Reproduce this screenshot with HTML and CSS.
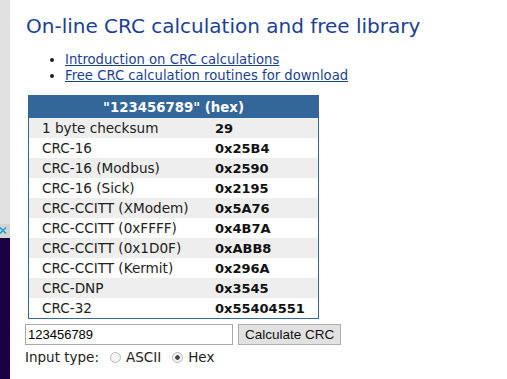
FILE: index.html
```html
<!DOCTYPE html>
<html lang="en">
<head>
  <meta charset="UTF-8">
  <title>On-line CRC calculation and free library</title>
  <link rel="stylesheet" href="styles.css">
</head>
<body>

  <div class="page">
    <div class="side">
      <div class="side-top"></div>
      <div class="ad-close">
        <svg width="10" height="14" viewBox="0 0 10 14">
          <path d="M0 3.5 L6 9.5 M6 3.5 L0 9.5" stroke="#1aa3c8" stroke-width="1.6" fill="none"/>
        </svg>
      </div>
      <div class="side-ad"></div>
    </div>

    <div class="content">
      <h1>On-line CRC calculation and free library</h1>

      <ul class="links">
        <li><a href="#">Introduction on CRC calculations</a></li>
        <li><a href="#">Free CRC calculation routines for download</a></li>
      </ul>

      <table class="crc-table">
        <tr><th colspan="2">"123456789" (hex)</th></tr>
        <tr><td class="name">1 byte checksum</td><td class="val">29</td></tr>
        <tr><td class="name">CRC-16</td><td class="val">0x25B4</td></tr>
        <tr><td class="name">CRC-16 (Modbus)</td><td class="val">0x2590</td></tr>
        <tr><td class="name">CRC-16 (Sick)</td><td class="val">0x2195</td></tr>
        <tr><td class="name">CRC-CCITT (XModem)</td><td class="val">0x5A76</td></tr>
        <tr><td class="name">CRC-CCITT (0xFFFF)</td><td class="val">0x4B7A</td></tr>
        <tr><td class="name">CRC-CCITT (0x1D0F)</td><td class="val">0xABB8</td></tr>
        <tr><td class="name">CRC-CCITT (Kermit)</td><td class="val">0x296A</td></tr>
        <tr><td class="name">CRC-DNP</td><td class="val">0x3545</td></tr>
        <tr><td class="name">CRC-32</td><td class="val">0x55404551</td></tr>
      </table>

      <form class="calc" onsubmit="return false;">
        <div class="calc-row">
          <input type="text" class="calc-input" value="123456789">
          <button type="submit" class="calc-button">Calculate CRC</button>
        </div>
        <div class="type-row">
          <span class="type-label">Input type:</span>
          <label><input type="radio" name="type"> ASCII</label>
          <label><input type="radio" name="type" checked> Hex</label>
        </div>
      </form>
    </div>
  </div>

</body>
</html>
```

FILE: styles.css
```css
body {
  margin: 0;
  padding: 0;
  background-color: white;
  font-family: "DejaVu Sans", Verdana, sans-serif;
  color: #222;
}

.page {
  display: flex;
  min-height: 379px;
}

/* strip on the left (ad frame) */
.side {
  width: 10px;
  display: flex;
  flex-direction: column;
}

.side-top {
  height: 224px;
  background-color: #e1e1e1;
}

.ad-close {
  height: 14px;
  background-color: #d4d4d4;
}

.ad-close svg {
  display: block;
}

.side-ad {
  flex: 1;
  background-color: #1b0043;
}

.content {
  padding-left: 15px;
}

h1 {
  font-size: 20px;
  font-weight: normal;
  color: #1b3f93;
  margin: 12px 0 0 1px;
  line-height: 28px;
}

.links {
  margin: 12px 0 0 0;
  padding-left: 40px;
  font-size: 13.2px;
  line-height: 16px;
}

.links a {
  color: #1b3f93;
}

.crc-table {
  margin: 11px 0 0 3px;
  border: 1px solid #336699;
  border-collapse: collapse;
  font-size: 13.6px;
  width: 291px;
}

.crc-table th {
  background-color: #336699;
  color: white;
  height: 22px;
  padding: 0;
  font-size: 13.3px;
}

.crc-table td {
  height: 20px;
  padding: 0;
}

.crc-table tr:nth-child(even) td {
  background-color: #eeeeee;
}

.crc-table td.name {
  padding-left: 13px;
  width: 173px;
  color: #222;
}

.crc-table td.val {
  font-weight: bold;
  font-size: 13px;
  color: #111;
}

.calc {
  margin: 5px 0 0 0;
}

.calc-row {
  display: flex;
  gap: 5px;
}

.calc-input {
  width: 202px;
  height: 17px;
  padding: 1px 2px;
  border: 1px solid #a9a9a9;
  font-family: "Liberation Sans", Arial, sans-serif;
  font-size: 13px;
  margin: 0;
}

.calc-button {
  height: 21px;
  padding: 0 6px;
  border: 1px solid #adadad;
  background-color: #e1e1e1;
  font-family: "Liberation Sans", Arial, sans-serif;
  font-size: 13.5px;
  color: #111;
  margin: 0;
}

.type-row {
  margin-top: 4px;
  font-size: 13.5px;
  display: flex;
  align-items: center;
  gap: 11px;
}

.type-row label {
  display: flex;
  align-items: center;
}

.type-row input {
  appearance: none;
  margin: 0 5px 0 0;
  width: 11px;
  height: 11px;
  border: 1px solid #b8b8b8;
  border-radius: 50%;
  background-color: #f4f4f4;
  box-sizing: border-box;
}

.type-row input:checked {
  background: radial-gradient(circle, #444 0, #444 2px, #f4f4f4 2.5px);
}
```
